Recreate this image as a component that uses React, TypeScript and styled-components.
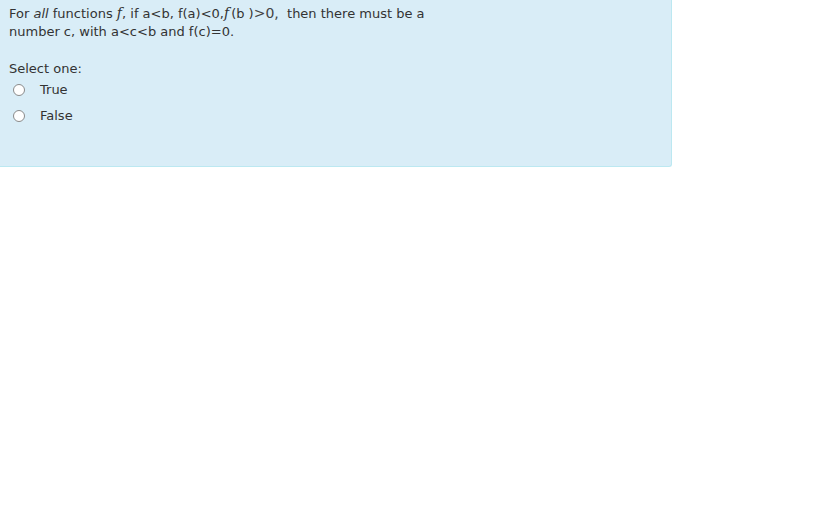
import styled, { createGlobalStyle } from "styled-components";

const Global = createGlobalStyle`
  body {
    margin: 0;
    background: #fff;
    font-family: "DejaVu Sans", Verdana, sans-serif;
  }
`

const Formulation = styled.div`
  box-sizing: border-box;
  width: 672px;
  height: 167px;
  background-color: #d9edf7;
  border-right: 1px solid #bce8f1;
  border-bottom: 1px solid #bce8f1;
  border-bottom-right-radius: 3px;
  padding: 4px 0 0 9px;
  color: #333;
  font-size: 13px;
  line-height: 18px;
`

const QText = styled.div`
  width: 430px;
`

const MathF = styled.span<{ $gap?: boolean }>`
  font-family: "DejaVu Serif", serif;
  font-style: italic;
  font-size: 14px;
  margin-right: ${props => props.$gap ? "2px" : "0"};
`

const Big = styled.span`
  font-size: 14px;
  color: #444;
`

const Prompt = styled.div`
  margin-top: 19px;
`

const Answers = styled.div`
  display: flex;
  flex-direction: column;
  gap: 7px;
  margin-top: 2px;
  padding-left: 4px;
`

const Option = styled.label`
  display: flex;
  align-items: center;
  height: 19px;
`

const Radio = styled.span`
  box-sizing: border-box;
  width: 12px;
  height: 12px;
  border-radius: 50%;
  border: 1px solid #8a8a8a;
  background: #fff;
  margin-right: 15px;
`

function App() {
  return (
    <>
      <Global />
      <Formulation>
        <QText>
          For <i>all</i> functions <MathF>f</MathF>, if a&lt;b, f(a)&lt;0,<MathF $gap>f</MathF>(b )<Big>&gt;0,</Big>&nbsp; then there must be a number c, with a&lt;c&lt;b and f(c)=0.
        </QText>
        <Prompt>Select one:</Prompt>
        <Answers>
          {["True", "False"].map(label => (
            <Option key={label}>
              <Radio />
              {label}
            </Option>
          ))}
        </Answers>
      </Formulation>
    </>
  );
}

export default App;
